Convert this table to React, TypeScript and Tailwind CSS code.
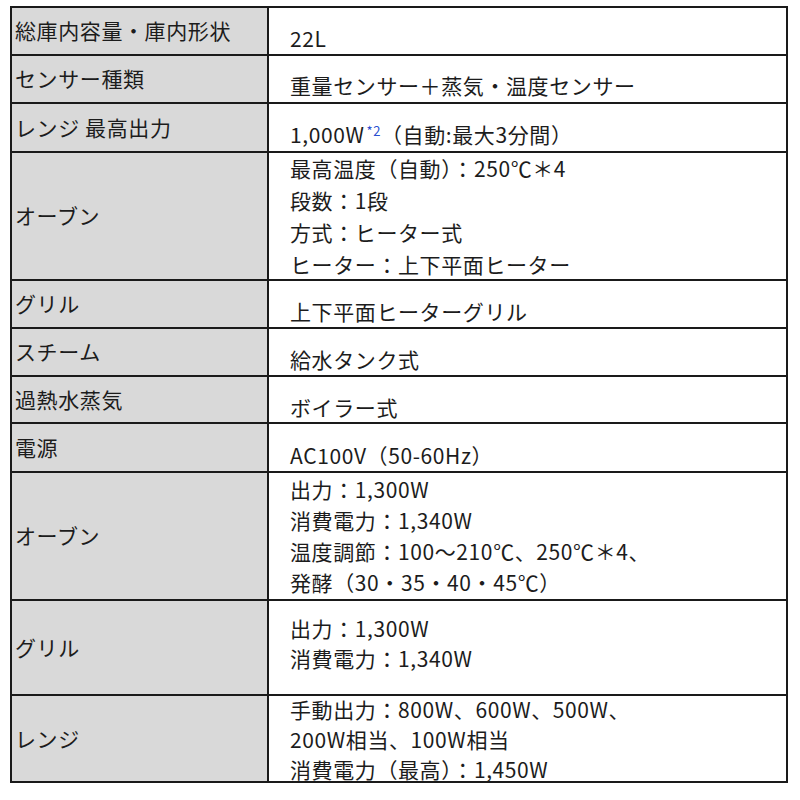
import React from 'react';

type Row = {
  label: string;
  lines: React.ReactNode[];
  h: string;
  valueClass: string;
};

const rows: Row[] = [
  { label: '総庫内容量・庫内形状', lines: ['22L'], h: 'h-[48px]', valueClass: 'pt-[13px] leading-[32px]' },
  { label: 'センサー種類', lines: ['重量センサー＋蒸気・温度センサー'], h: 'h-[48px]', valueClass: 'pt-[12px] leading-[32px]' },
  {
    label: 'レンジ 最高出力',
    lines: [
      <>
        1,000W
        <sup className="ml-[2px] text-[13px] text-[#2a4fd0]">*2</sup>
        （自動:最大3分間）
      </>,
    ],
    h: 'h-[49px]',
    valueClass: 'pt-[12px] leading-[32px]',
  },
  {
    label: 'オーブン',
    lines: ['最高温度（自動）：250℃＊4', '段数：1段', '方式：ヒーター式', 'ヒーター：上下平面ヒーター'],
    h: 'h-[128px]',
    valueClass: 'leading-[32px]',
  },
  { label: 'グリル', lines: ['上下平面ヒーターグリル'], h: 'h-[48px]', valueClass: 'pt-[14px] leading-[32px]' },
  { label: 'スチーム', lines: ['給水タンク式'], h: 'h-[48px]', valueClass: 'pt-[14px] leading-[32px]' },
  { label: '過熱水蒸気', lines: ['ボイラー式'], h: 'h-[47px]', valueClass: 'pt-[14px] leading-[32px]' },
  { label: '電源', lines: ['AC100V（50-60Hz）'], h: 'h-[49px]', valueClass: 'pt-[14px] leading-[32px]' },
  {
    label: 'オーブン',
    lines: ['出力：1,300W', '消費電力：1,340W', '温度調節：100〜210℃、250℃＊4、', '発酵（30・35・40・45℃）'],
    h: 'h-[128px]',
    valueClass: 'leading-[31px]',
  },
  {
    label: 'グリル',
    lines: ['出力：1,300W', '消費電力：1,340W'],
    h: 'h-[95px]',
    valueClass: 'justify-start pt-[12px] leading-[30px]',
  },
  {
    label: 'レンジ',
    lines: ['手動出力：800W、600W、500W、', '200W相当、100W相当', '消費電力（最高）：1,450W'],
    h: 'h-[85px]',
    valueClass: 'leading-[30px]',
  },
];

export default function App() {
  return (
    <div
      className="h-[800px] w-[800px] bg-white text-[21px] tracking-[0.6px] text-[#1c1c1c]"
      style={{ fontFamily: '"Noto Sans CJK JP", "Noto Sans", sans-serif' }}
    >
      <div className="ml-[10px] w-[778px] pt-[6px]">
        <div className="border-2 border-[#1a1a1a]">
          {rows.map((row, i) => (
            <div
              key={i}
              className={`flex ${row.h} ${i < rows.length - 1 ? 'border-b-2 border-[#1a1a1a]' : ''}`}
            >
              <div className="flex w-[257px] shrink-0 items-center border-r-2 border-[#1a1a1a] bg-[#d9d9d9] pl-[3px]">
                {row.label}
              </div>
              <div className={`flex flex-1 flex-col justify-center whitespace-nowrap pl-[21px] ${row.valueClass}`}>
                {row.lines.map((line, j) => (
                  <div key={j}>{line}</div>
                ))}
              </div>
            </div>
          ))}
        </div>
      </div>
    </div>
  );
}
